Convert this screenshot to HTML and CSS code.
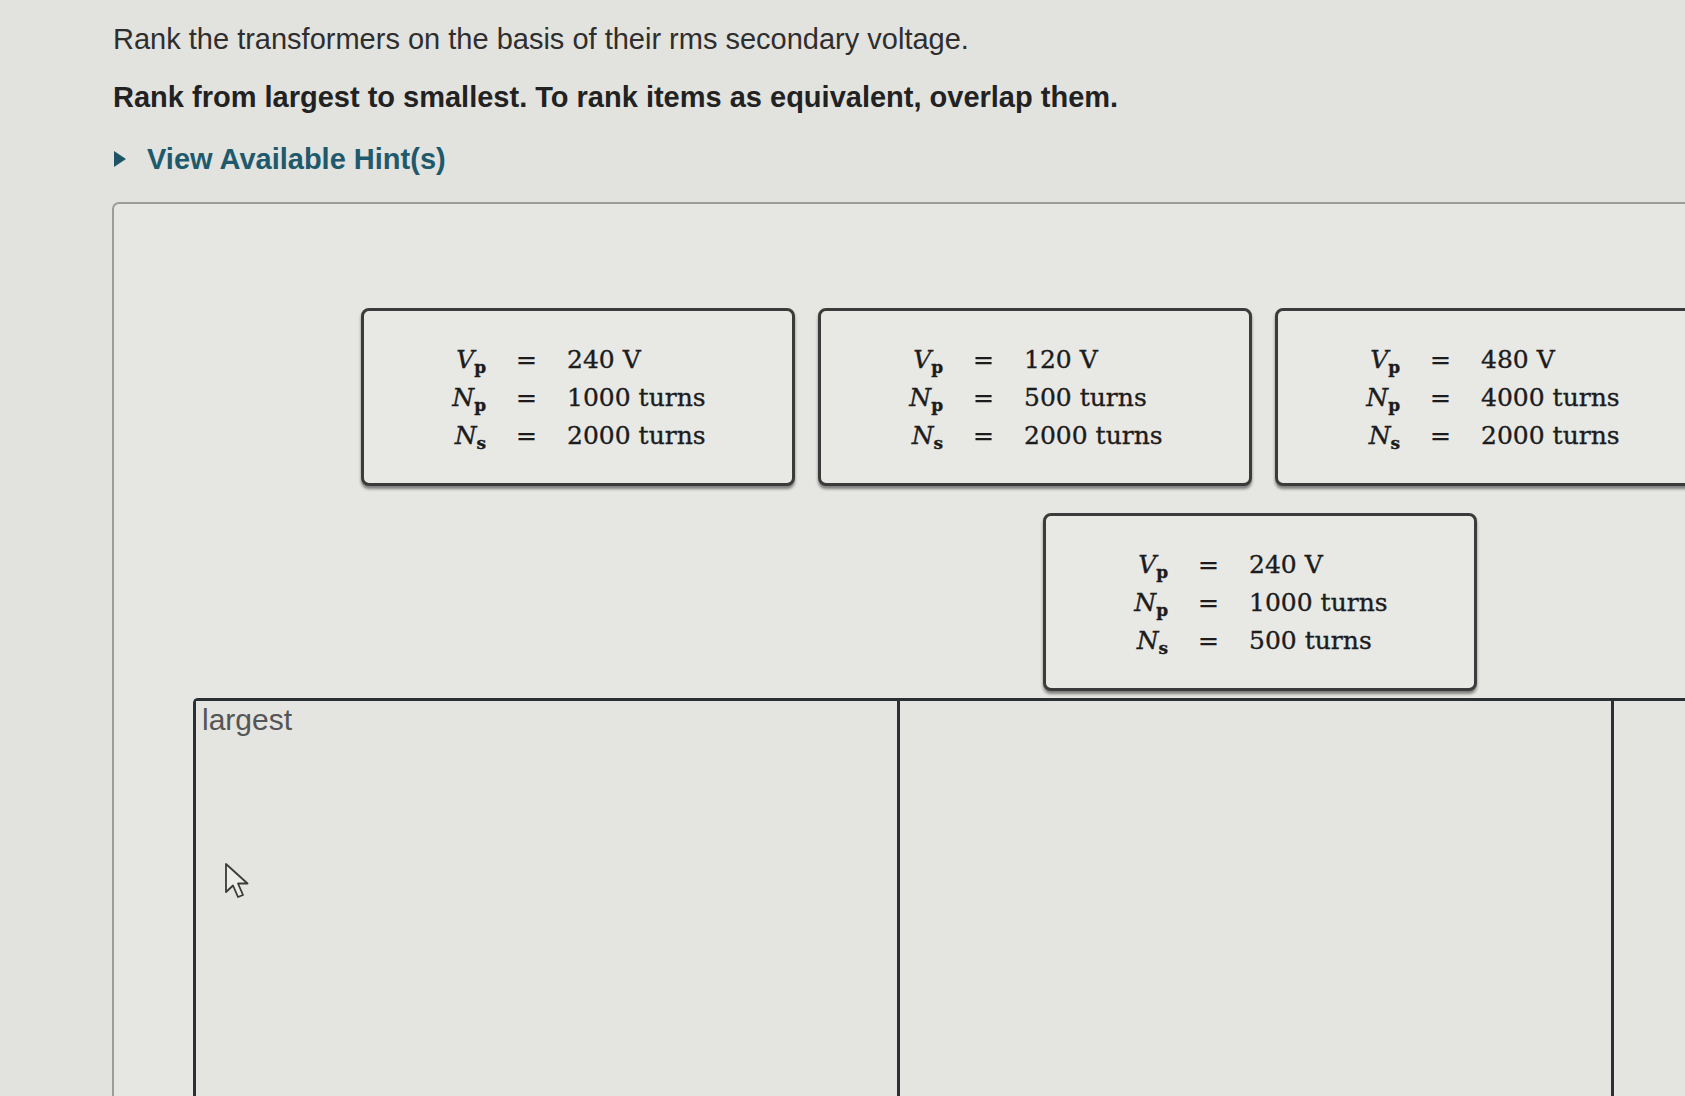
FILE: index.html
```html
<!DOCTYPE html>
<html>
<head>
<meta charset="utf-8">
<link rel="stylesheet" href="styles.css">
</head>
<body>
<div class="page">
  <p class="q1">Rank the transformers on the basis of their rms secondary voltage.</p>
  <p class="q2">Rank from largest to smallest. To rank items as equivalent, overlap them.</p>
  <div class="hint"><span class="tri"></span><span class="hint-text">View Available Hint(s)</span></div>

  <div class="panel">
    <div class="cards">
      <div class="card">
        <div class="eqs">
          <span class="v"><i>V</i><sub>p</sub></span><span class="eq">=</span><span class="val">240 V</span>
          <span class="v"><i>N</i><sub>p</sub></span><span class="eq">=</span><span class="val">1000 turns</span>
          <span class="v"><i>N</i><sub>s</sub></span><span class="eq">=</span><span class="val">2000 turns</span>
        </div>
      </div>
      <div class="card">
        <div class="eqs">
          <span class="v"><i>V</i><sub>p</sub></span><span class="eq">=</span><span class="val">120 V</span>
          <span class="v"><i>N</i><sub>p</sub></span><span class="eq">=</span><span class="val">500 turns</span>
          <span class="v"><i>N</i><sub>s</sub></span><span class="eq">=</span><span class="val">2000 turns</span>
        </div>
      </div>
      <div class="card">
        <div class="eqs">
          <span class="v"><i>V</i><sub>p</sub></span><span class="eq">=</span><span class="val">480 V</span>
          <span class="v"><i>N</i><sub>p</sub></span><span class="eq">=</span><span class="val">4000 turns</span>
          <span class="v"><i>N</i><sub>s</sub></span><span class="eq">=</span><span class="val">2000 turns</span>
        </div>
      </div>
    </div>
    <div class="cards cards-second">
      <div class="card">
        <div class="eqs">
          <span class="v"><i>V</i><sub>p</sub></span><span class="eq">=</span><span class="val">240 V</span>
          <span class="v"><i>N</i><sub>p</sub></span><span class="eq">=</span><span class="val">1000 turns</span>
          <span class="v"><i>N</i><sub>s</sub></span><span class="eq">=</span><span class="val">500 turns</span>
        </div>
      </div>
    </div>

    <div class="rank">
      <div class="slot slot-1"><span class="label">largest</span></div>
      <div class="slot slot-2"></div>
      <div class="slot slot-3"></div>
    </div>
  </div>

  <svg class="cursor" width="30" height="40" viewBox="0 0 30 40">
    <path d="M2 2 L2 30 L9 23.5 L14 35 L19 33 L14 21.5 L23.5 21.5 Z" fill="#ecece9" stroke="#3a3a3a" stroke-width="1.8" stroke-linejoin="round"/>
  </svg>
</div>
</body>
</html>
```
FILE: styles.css
```css
html, body {
  margin: 0;
  padding: 0;
}
body {
  background: #e2e2df;
  width: 1685px;
  height: 1096px;
  overflow: hidden;
  font-family: "Liberation Sans", Arial, sans-serif;
  color: #2a2a2a;
}
.page {
  position: relative;
  padding: 22px 0 0 112px;
}
.q1 {
  margin: 0;
  font-size: 29px;
  line-height: 34px;
  color: #2e2e2e;
  padding-left: 1px;
}
.q2 {
  margin: 24px 0 0 0;
  font-size: 29px;
  line-height: 34px;
  font-weight: bold;
  color: #222;
  padding-left: 1px;
}
.hint {
  margin-top: 28px;
  display: flex;
  align-items: center;
  height: 34px;
}
.tri {
  width: 0;
  height: 0;
  border-left: 12px solid #1d5566;
  border-top: 8px solid transparent;
  border-bottom: 8px solid transparent;
  margin-left: 2px;
  margin-right: 21px;
}
.hint-text {
  font-size: 29px;
  font-weight: bold;
  color: #1e5a6c;
}
.panel {
  margin-top: 26px;
  width: 1650px;
  height: 1000px;
  box-sizing: border-box;
  border: 2px solid #9c9c9a;
  border-radius: 7px;
  background: #e6e6e3;
  padding: 104px 0 0 247px;
}
.cards {
  display: flex;
  gap: 23px;
}
.cards-second {
  margin-top: 27px;
  padding-left: 682px;
}
.card {
  flex: 0 0 auto;
  width: 434px;
  height: 178px;
  box-sizing: border-box;
  border: 3px solid #3b3b3b;
  border-radius: 8px;
  background: #e8e8e5;
  box-shadow: 0 3px 3px rgba(0, 0, 0, 0.45);
  display: flex;
  align-items: center;
  justify-content: center;
}
.eqs {
  display: grid;
  grid-template-columns: auto auto auto;
  column-gap: 30px;
  font-family: "DejaVu Serif", "Liberation Serif", serif;
  font-size: 25px;
  line-height: 38px;
  color: #1c1c1c;
  -webkit-text-stroke: 0.35px #1c1c1c;
  margin-top: 2px;
  margin-left: 2px;
}
.v {
  text-align: right;
  white-space: nowrap;
}
.v i {
  font-style: italic;
}
.v sub {
  font-size: 0.68em;
  line-height: 0;
  vertical-align: -0.3em;
  font-weight: bold;
}
.eq {
  text-align: center;
}
.val {
  white-space: nowrap;
}
.rank {
  margin: 7px 0 0 -168px;
  display: flex;
  border-top: 3px solid #2a3034;
  border-left: 3px solid #2a3034;
  border-top-left-radius: 5px;
  height: 500px;
}
.slot {
  box-sizing: border-box;
  border-right: 3px solid #2a3034;
  background: #e4e4e1;
  flex: 0 0 auto;
}
.slot-1 {
  width: 704px;
  padding: 2px 0 0 6px;
}
.slot-2 {
  width: 714px;
}
.slot-3 {
  width: 300px;
}
.label {
  font-size: 30px;
  line-height: 34px;
  color: #555;
}
.cursor {
  position: absolute;
  left: 224px;
  top: 862px;
}
```
